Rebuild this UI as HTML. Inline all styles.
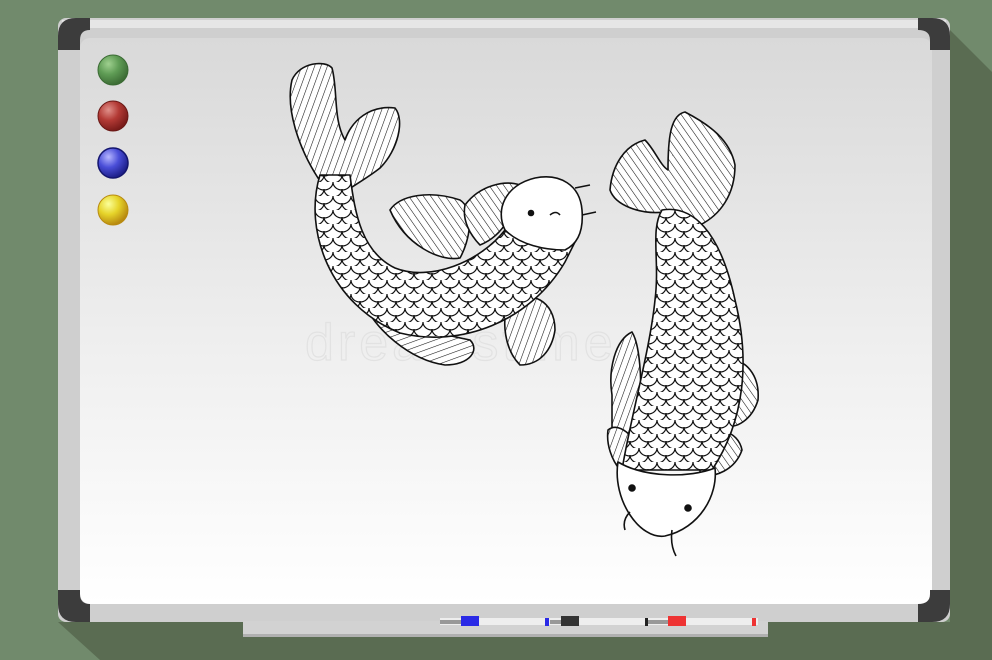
<!DOCTYPE html>
<html><head><meta charset="utf-8"><style>
html,body{margin:0;padding:0;width:992px;height:660px;overflow:hidden;background:#718a6c;font-family:"Liberation Sans",sans-serif}
</style></head><body>
<svg width="992" height="660" viewBox="0 0 992 660" xmlns="http://www.w3.org/2000/svg">
<defs>
<linearGradient id="bd" x1="0" y1="0" x2="0" y2="1"><stop offset="0" stop-color="#d9d9d9"/><stop offset="0.55" stop-color="#efefef"/><stop offset="1" stop-color="#ffffff"/></linearGradient>
<pattern id="sc" width="18" height="14" patternUnits="userSpaceOnUse"><rect width="18" height="14" fill="#fff"/><path d="M0 7 A9 8 0 0 0 18 7 M-9 14 A9 8 0 0 0 9 14 M9 14 A9 8 0 0 0 27 14 M-9 0 A9 8 0 0 0 9 0 M9 0 A9 8 0 0 0 27 0" fill="none" stroke="#111" stroke-width="1.2"/></pattern>
<pattern id="st" width="6" height="6" patternUnits="userSpaceOnUse" patternTransform="rotate(20)"><rect width="6" height="6" fill="#fff"/><line x1="0" y1="0" x2="0" y2="6" stroke="#111" stroke-width="1.1"/></pattern>
<pattern id="st2" width="6" height="6" patternUnits="userSpaceOnUse" patternTransform="rotate(-35)"><rect width="6" height="6" fill="#fff"/><line x1="0" y1="0" x2="0" y2="6" stroke="#111" stroke-width="1.1"/></pattern>
<pattern id="st3" width="6" height="6" patternUnits="userSpaceOnUse" patternTransform="rotate(70)"><rect width="6" height="6" fill="#fff"/><line x1="0" y1="0" x2="0" y2="6" stroke="#111" stroke-width="1.1"/></pattern>
<radialGradient id="gG" cx="0.35" cy="0.3" r="0.7"><stop offset="0" stop-color="#9fd08f"/><stop offset="0.5" stop-color="#5f9c55"/><stop offset="1" stop-color="#3d6d36"/></radialGradient>
<radialGradient id="gR" cx="0.35" cy="0.3" r="0.7"><stop offset="0" stop-color="#e0908a"/><stop offset="0.5" stop-color="#b33a35"/><stop offset="1" stop-color="#7a1c1a"/></radialGradient>
<radialGradient id="gB" cx="0.35" cy="0.3" r="0.7"><stop offset="0" stop-color="#b6b6ff"/><stop offset="0.5" stop-color="#4a4ed8"/><stop offset="1" stop-color="#1d1f8a"/></radialGradient>
<radialGradient id="gY" cx="0.35" cy="0.3" r="0.7"><stop offset="0" stop-color="#fbff9a"/><stop offset="0.5" stop-color="#e6d42a"/><stop offset="1" stop-color="#b88a10"/></radialGradient>
</defs>
<polygon points="950,30 992,72 992,660 100,660 58,622 950,622" fill="#5a6c52"/>
<rect x="58" y="18" width="892" height="604" rx="8" fill="#cfcfcf"/>
<rect x="62" y="20" width="884" height="8" fill="#e6e6e6"/>
<rect x="80" y="38" width="852" height="566" rx="10" fill="url(#bd)"/>
<path d="M58 50 V36 Q58 18 76 18 H90 V30 Q80 30 80 40 V50 Z" fill="#3c3c3c"/>
<path d="M950 50 V36 Q950 18 932 18 H918 V30 Q930 30 930 40 V50 Z" fill="#3c3c3c"/>
<path d="M58 590 V604 Q58 622 76 622 H90 V604 Q80 604 80 594 V590 Z" fill="#3c3c3c"/>
<path d="M950 590 V604 Q950 622 932 622 H918 V604 Q930 604 930 594 V590 Z" fill="#3c3c3c"/>
<rect x="243" y="621" width="525" height="15" fill="#d2d2d2"/>
<rect x="243" y="634" width="525" height="3" fill="#b0b0b0"/>
<rect x="440" y="618" width="110" height="7" fill="#eee"/><rect x="440" y="620" width="22" height="4" fill="#999"/><rect x="461" y="616" width="18" height="10" fill="#2a2ae6"/><rect x="545" y="618" width="4" height="8" fill="#2a2ae6"/>
<rect x="550" y="618" width="100" height="7" fill="#eee"/><rect x="550" y="620" width="12" height="4" fill="#999"/><rect x="561" y="616" width="18" height="10" fill="#333"/><rect x="645" y="618" width="3" height="8" fill="#222"/>
<rect x="648" y="618" width="110" height="7" fill="#eee"/><rect x="648" y="620" width="20" height="4" fill="#999"/><rect x="668" y="616" width="18" height="10" fill="#e33"/><rect x="752" y="618" width="4" height="8" fill="#e33"/>
<circle cx="113" cy="70" r="15" fill="url(#gG)" stroke="#3a6a33" stroke-width="1"/>
<circle cx="113" cy="116" r="15" fill="url(#gR)" stroke="#6a1815" stroke-width="1"/>
<circle cx="113" cy="163" r="15" fill="url(#gB)" stroke="#14166e" stroke-width="1.5"/>
<circle cx="113" cy="210" r="15" fill="url(#gY)" stroke="#b88a10" stroke-width="1"/>
<text x="305" y="360" font-size="52" fill="none" stroke="#e2e2e2" stroke-width="1.2" letter-spacing="4">dreamstime</text>
<g stroke="#111" stroke-width="1.6" stroke-linejoin="round">
<path d="M318 178 C300 150 285 110 292 80 C300 62 325 60 332 68 C338 90 333 120 345 140 C352 120 370 105 395 108 C405 120 398 150 380 168 C365 180 345 190 335 200 Z" fill="url(#st)"/>
<path d="M390 210 C400 195 430 190 460 200 C475 210 470 240 460 258 C440 262 405 245 390 210 Z" fill="url(#st2)"/>
<path d="M362 300 C380 315 420 330 470 340 C480 350 470 365 445 365 C410 360 375 330 362 300 Z" fill="url(#st3)"/>
<path d="M510 300 C530 290 555 300 555 330 C552 350 540 365 520 365 C505 350 500 320 510 300 Z" fill="url(#st)"/>
<path d="M465 205 C480 185 505 180 520 185 C515 210 505 235 480 245 C470 235 462 220 465 205 Z" fill="url(#st2)"/>
<path d="M320 175 C303 230 330 305 400 333 C460 348 530 322 565 262 L578 236 C560 250 530 245 505 230 C480 262 430 282 395 268 C362 252 355 215 350 175 Z" fill="url(#sc)"/>
<path d="M505 230 C495 210 505 185 535 178 C560 173 580 185 582 210 C584 235 575 245 565 250 C545 250 520 245 505 230 Z" fill="#fff"/>
<path d="M575 188 L590 185 M582 215 L596 212" fill="none"/>
<circle cx="531" cy="213" r="2.5" fill="#111"/>
<path d="M550 215 Q556 210 560 215" fill="none"/>
<path d="M665 212 C640 215 615 205 610 190 C612 165 625 145 645 140 C655 150 660 165 668 170 C668 140 670 115 685 112 C710 125 730 140 735 165 C735 195 720 215 700 225 Z" fill="url(#st2)"/>
<path d="M612 395 C608 370 615 340 632 332 C640 345 642 380 640 410 C635 440 625 450 612 440 Z" fill="url(#st)"/>
<path d="M608 430 C620 420 640 440 645 465 L620 470 C612 460 606 445 608 430 Z" fill="url(#st)"/>
<path d="M728 360 C745 358 760 375 758 400 C752 420 735 430 725 425 Z" fill="url(#st2)"/>
<path d="M700 440 C715 425 738 430 742 450 C735 470 715 478 700 475 Z" fill="url(#st2)"/>
<path d="M662 210 C692 205 720 230 735 300 C750 360 745 420 712 470 L622 470 C630 420 650 350 655 300 C660 260 650 230 662 210 Z" fill="url(#sc)"/>
<path d="M618 462 C612 500 640 540 665 536 C700 528 718 495 715 468 C690 478 645 478 618 462 Z" fill="#fff"/>
<circle cx="632" cy="488" r="3" fill="#111"/><circle cx="688" cy="508" r="3" fill="#111"/>
<path d="M630 512 Q622 520 625 530 M672 530 Q670 545 676 556" fill="none"/>
</g>
</svg>
</body></html>
